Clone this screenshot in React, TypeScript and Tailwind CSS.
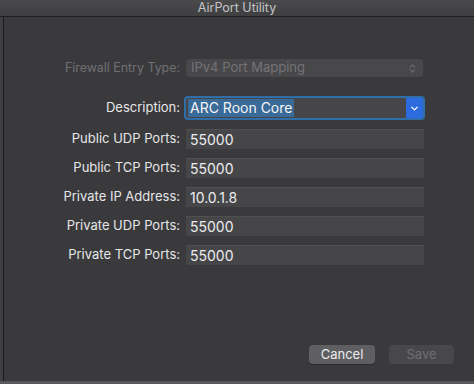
import { ChevronDown, ChevronsUpDown } from 'lucide-react'

const ROWS = [
  { label: 'Public UDP Ports:', value: '55000' },
  { label: 'Public TCP Ports:', value: '55000' },
  { label: 'Private IP Address:', value: '10.0.1.8' },
  { label: 'Private UDP Ports:', value: '55000' },
  { label: 'Private TCP Ports:', value: '55000' },
]

export default function App() {
  return (
    <div className="w-[474px] h-[384px] bg-[#3a3a3d] flex flex-col overflow-hidden" style={{ fontFamily: 'Inter, "Liberation Sans", sans-serif' }}>
      {/* title bar */}
      <div className="h-[17px] shrink-0 bg-gradient-to-b from-[#4a4a4c] to-[#3f3f41] border-b border-[#1e1e20] flex items-center justify-center">
        <span className="text-[12.5px] text-[#c4c4c6] leading-none">AirPort Utility</span>
      </div>

      <div className="flex-1 flex">
        {/* left window edge */}
        <div className="w-[3px] bg-[#404043]" />
        <div className="w-px bg-[#1c1c1e]" />

        <div className="flex-1 flex flex-col pl-[54px] text-[13px]">
          <div className="flex items-center h-[18px] mt-[42px]">
            <span className="w-[122px] text-right text-[#707073] whitespace-nowrap text-[12.4px]">Firewall Entry Type:</span>
            <div className="ml-[6px] w-[237px] h-[18px] rounded-[4px] bg-[#48484b] flex items-center px-[5px] text-[#737376]">
              <span className="flex-1">IPv4 Port Mapping</span>
              <ChevronsUpDown className="w-[11px] h-[11px] text-[#6d6d70]" strokeWidth={2.5} />
            </div>
          </div>

          <div className="flex items-center h-[24px] mt-[19px]">
            <span className="w-[122px] text-right text-[#e6e6e8] whitespace-nowrap">Description:</span>
            <div className="ml-[4px] w-[241px] h-[24px] rounded-[4px] bg-[#2f6ea8] p-[2px] flex">
              <div className="flex-1 flex bg-[#464649] rounded-[2px] overflow-hidden">
                <div className="flex-1 flex items-center pl-[2px]">
                  <span className="bg-[#3a6a98] text-[#f4f4f6] px-[2px] text-[14px] leading-[18px]">ARC Roon Core</span>
                </div>
                <div className="w-[17px] bg-[#2c6bde] flex items-center justify-center">
                  <ChevronDown className="w-[11px] h-[11px] text-white" strokeWidth={3} />
                </div>
              </div>
            </div>
          </div>

          <div className="flex flex-col gap-[9px] mt-[9px]">
            {ROWS.map(r => (
              <div key={r.label} className="flex items-center h-[20px]">
                <span className="w-[122px] text-right text-[#e6e6e8] whitespace-nowrap">{r.label}</span>
                <div className="ml-[6px] w-[238px] h-[20px] bg-[#464649] border-t border-[#505053] flex items-center px-[4px] text-[14px] text-[#ececee]">
                  {r.value}
                </div>
              </div>
            ))}
          </div>

          <div className="flex-1" />
          <div className="flex justify-end gap-[14px] pr-[20px] mb-[17px]">
            <button className="w-[66px] h-[19px] rounded-[4px] bg-[#5f5f62] text-[#ececee] text-[13px] leading-none shadow-[0_1px_0_#2a2a2c]">Cancel</button>
            <button className="w-[65px] h-[19px] rounded-[4px] bg-[#48484b] text-[#6e6e71] text-[13px] leading-none">Save</button>
          </div>
        </div>
      </div>
      <div className="h-[3px] shrink-0 bg-[#58585b]" />
    </div>
  )
}
